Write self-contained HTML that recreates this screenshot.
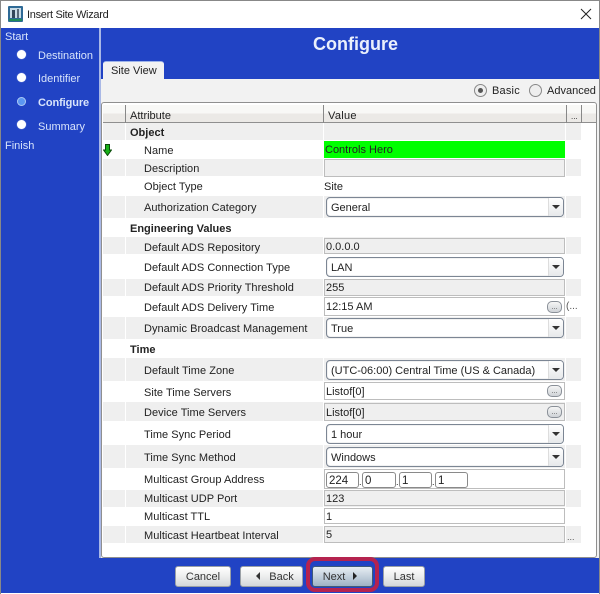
<!DOCTYPE html>
<html><head><meta charset="utf-8">
<style>
html,body{margin:0;padding:0;width:600px;height:594px;overflow:hidden;background:#fff}
body{position:relative;font-family:"Liberation Sans",Arial,sans-serif;font-size:11px;color:#222;filter:blur(.3px)}
div,span{position:absolute;box-sizing:border-box;white-space:nowrap}
.g{left:103px;width:478px;background:#efefef}
.v{left:125px;width:1px;background:#fff}
.l{left:144px;line-height:18px;height:18px;letter-spacing:.03px}
.h{left:130px;font-weight:bold;line-height:18px;height:18px}
.t{left:324px;width:241px;height:18px;border:1px solid #bdbdbd;line-height:18px;padding-left:1px;background:#fff}
.t.d{background:#efefef}
.s{left:326px;width:238px;height:20px;border:1px solid #7c8694;border-radius:4px;background:#fff;line-height:20px;padding-left:4px;box-shadow:inset 0 0 1px #aaa}
.s:after{content:"";position:absolute;right:0;top:0;width:14px;height:18px;background:linear-gradient(#fff,#e6e8ea);border-left:1px solid #ddd;border-radius:0 3px 3px 0}
.s:before{content:"";position:absolute;z-index:1;right:3px;top:7px;border:4px solid transparent;border-top:4px solid #333;border-bottom:0}
.e{left:547px;width:15px;height:12px;border:1px solid #8a9098;border-radius:5px;background:linear-gradient(#f6f6f6,#cfd3d8);font-size:7px;line-height:11px;text-align:center;color:#444}
.b{height:21px;top:566px;border:1px solid #9aa0a6;border-radius:3px;background:linear-gradient(#fff,#eceded 50%,#d4d7da);text-align:center;line-height:21px;color:#333}
.n{color:#d8e4fb;left:38px;line-height:14px}
.dot{left:17px;width:9px;height:9px;border-radius:50%;background:#fff;box-shadow:0 0 1px #dfe7fb}
.ip{top:472px;height:16px;border:1px solid #8a8a8a;border-radius:3px;background:#fff;line-height:16px;padding-left:2px;font-size:11.5px}
</style></head><body>
<div style="left:0;top:0;width:600px;height:1px;background:#888"></div>
<div style="left:0;top:0;width:1px;height:594px;background:#888"></div>
<div style="left:599px;top:0;width:1px;height:594px;background:#888"></div>
<svg style="position:absolute;left:8px;top:6px" width="15" height="16"><rect width="15" height="16" rx="1" fill="#2f6a96"/><rect x="2" y="2" width="11" height="10" fill="#c9dbe6"/><rect x="4" y="4" width="3" height="8" fill="#33475a"/><rect x="9" y="3" width="2" height="9" fill="#5a6a7a"/><rect x="1" y="13" width="13" height="2" fill="#1f8a5a"/></svg>
<div style="left:27px;top:8px;line-height:14px;font-size:11px;letter-spacing:-.3px;color:#222">Insert Site Wizard</div>
<svg style="position:absolute;left:580px;top:8px" width="12" height="12"><path d="M1 1L11 11M11 1L1 11" stroke="#222" stroke-width="1"/></svg>

<div style="left:1px;top:28px;width:598px;height:565px;background:#2143c4"></div>
<div style="left:99px;top:28px;width:2px;height:530px;background:#a9b8e6"></div>
<div style="left:5px;top:30px;line-height:14px;color:#d8e4fb">Start</div>
<div class="dot" style="top:50px"></div><div class="n" style="top:49px">Destination</div>
<div class="dot" style="top:73px"></div><div class="n" style="top:72px">Identifier</div>
<div class="dot" style="top:97px;background:#5b97f2;box-shadow:0 0 0 1px #a9c4f2 inset"></div><div class="n" style="top:96px;font-weight:bold;left:38px;letter-spacing:-.1px">Configure</div>
<div class="dot" style="top:120px"></div><div class="n" style="top:120px">Summary</div>
<div style="left:5px;top:139px;line-height:14px;color:#d8e4fb">Finish</div>

<div style="left:313px;top:33px;font-size:18px;font-weight:bold;color:#eaf0fc;line-height:23px">Configure</div>
<div style="left:103px;top:61px;width:61px;height:18px;background:#f2f2f2;border-radius:3px 3px 0 0;border-top:1px solid #9db3ea;line-height:19px;padding-left:8px">Site View</div>

<div style="left:101px;top:79px;width:498px;height:479px;background:#f2f2f2"></div>
<div style="left:474px;top:84px;width:13px;height:13px;border-radius:50%;border:1px solid #888;background:#eee"></div>
<div style="left:478px;top:88px;width:5px;height:5px;border-radius:50%;background:#555"></div>
<div style="left:492px;top:84px;line-height:14px;letter-spacing:.2px">Basic</div>
<div style="left:529px;top:84px;width:13px;height:13px;border-radius:50%;border:1px solid #888;background:#eee"></div>
<div style="left:547px;top:84px;line-height:14px">Advanced</div>

<div style="left:101px;top:102px;width:496px;height:456px;background:#fff;border:1px solid #8f8f8f;border-radius:3px"></div>
<div style="left:103px;top:105px;width:493px;height:18px;background:linear-gradient(#f8f8f6 50%,#ebe9e6 50%);border-bottom:1px solid #8f8f8f"></div>
<div style="left:125px;top:105px;width:1px;height:18px;background:#888"></div>
<div style="left:323px;top:105px;width:1px;height:18px;background:#888"></div>
<div style="left:566px;top:105px;width:1px;height:18px;background:#888"></div>
<div style="left:581px;top:105px;width:1px;height:18px;background:#888"></div>
<div style="left:130px;top:108px;line-height:16px">Attribute</div>
<div style="left:328px;top:108px;line-height:16px;letter-spacing:.3px">Value</div>
<div style="left:571px;top:111px;font-size:8px;line-height:12px">...</div>

<div class="g" style="top:123px;height:17px"></div>
<div class="g" style="top:159px;height:17px"></div>
<div class="g" style="top:196px;height:22px"></div>
<div class="g" style="top:237px;height:17px"></div>
<div class="g" style="top:279px;height:17px"></div>
<div class="g" style="top:317px;height:22px"></div>
<div class="g" style="top:358px;height:23px"></div>
<div class="g" style="top:402px;height:19px"></div>
<div class="g" style="top:445px;height:23px"></div>
<div class="g" style="top:490px;height:17px"></div>
<div class="g" style="top:526px;height:17px"></div>
<div class="v" style="top:123px;height:420px"></div>
<div class="v" style="left:323px;top:123px;height:420px"></div>
<div class="v" style="left:565px;top:123px;height:420px"></div>

<svg style="position:absolute;left:103px;top:144px" width="9" height="12"><path d="M2.5 0.5H6.5V6H8.5L4.5 11.5L0.5 6H2.5Z" fill="#18b018" stroke="#0a4a0a" stroke-width="1"/></svg>

<div class="h" style="top:124px">Object</div>
<div class="l" style="top:142px">Name</div>
<div class="l" style="top:160px">Description</div>
<div class="l" style="top:178px">Object Type</div>
<div class="l" style="top:199px">Authorization Category</div>
<div class="h" style="top:220px">Engineering Values</div>
<div class="l" style="top:239px">Default ADS Repository</div>
<div class="l" style="top:259px">Default ADS Connection Type</div>
<div class="l" style="top:279px">Default ADS Priority Threshold</div>
<div class="l" style="top:299px">Default ADS Delivery Time</div>
<div class="l" style="top:320px">Dynamic Broadcast Management</div>
<div class="h" style="top:341px">Time</div>
<div class="l" style="top:362px">Default Time Zone</div>
<div class="l" style="top:384px">Site Time Servers</div>
<div class="l" style="top:404px">Device Time Servers</div>
<div class="l" style="top:426px">Time Sync Period</div>
<div class="l" style="top:449px">Time Sync Method</div>
<div class="l" style="top:471px">Multicast Group Address</div>
<div class="l" style="top:490px">Multicast UDP Port</div>
<div class="l" style="top:508px">Multicast TTL</div>
<div class="l" style="top:527px">Multicast Heartbeat Interval</div>

<div style="left:324px;top:141px;width:241px;height:17px;background:#00ff00;line-height:19px;padding-left:1px;color:#222">Controls Hero</div>
<div class="t d" style="top:159px"></div>
<div style="left:324px;top:178px;line-height:18px">Site</div>
<div class="s" style="top:197px">General</div>
<div class="t d" style="top:238px;height:16px;line-height:16px">0.0.0.0</div>
<div class="s" style="top:257px">LAN</div>
<div class="t d" style="top:279px;height:17px;line-height:16px">255</div>
<div class="t" style="top:297px;height:19px;line-height:18px">12:15 AM</div><div class="e" style="top:301px">...</div>
<div style="left:566px;top:300px;line-height:14px;font-size:10px;color:#555">(...</div>
<div class="s" style="top:318px">True</div>
<div class="s" style="top:360px">(UTC-06:00) Central Time (US &amp; Canada)</div>
<div class="t" style="top:382px;height:18px">Listof[0]</div><div class="e" style="top:385px">...</div>
<div class="t d" style="top:403px;height:18px">Listof[0]</div><div class="e" style="top:406px">...</div>
<div class="s" style="top:424px">1 hour</div>
<div class="s" style="top:447px">Windows</div>
<div class="t" style="top:469px;height:20px"></div>
<div class="ip" style="left:326px;width:33px">224</div>
<div class="ip" style="left:362px;width:34px">0</div>
<div class="ip" style="left:399px;width:33px">1</div>
<div class="ip" style="left:435px;width:33px">1</div>
<div style="left:359px;top:475px;line-height:14px;font-size:9px">.</div>
<div style="left:396px;top:475px;line-height:14px;font-size:9px">.</div>
<div style="left:432px;top:475px;line-height:14px;font-size:9px">.</div>
<div class="t d" style="top:490px;height:16px;line-height:16px">123</div>
<div class="t" style="top:508px;height:16px;line-height:17px">1</div>
<div class="t d" style="top:526px;height:17px;line-height:17px">5</div>
<div style="left:567px;top:532px;font-size:9px;line-height:10px;color:#555">...</div>

<div class="b" style="left:175px;width:56px">Cancel</div>
<div class="b" style="left:240px;width:63px;padding-left:20px">Back</div>
<svg style="position:absolute;left:256px;top:572px" width="5" height="8"><path d="M4 0V8L0 4Z" fill="#333"/></svg>
<div style="left:306px;top:557px;width:73px;height:35px;border:4px solid #b5234f;border-radius:9px"></div>
<div class="b" style="left:312px;width:61px;padding-right:17px;border-color:#3f5a78;background:linear-gradient(#e8eef3,#c3d0dc 50%,#9fb2c4)">Next</div>
<svg style="position:absolute;left:353px;top:572px" width="5" height="8"><path d="M0 0V8L4 4Z" fill="#222"/></svg>
<div class="b" style="left:383px;width:42px">Last</div>
</body></html>
